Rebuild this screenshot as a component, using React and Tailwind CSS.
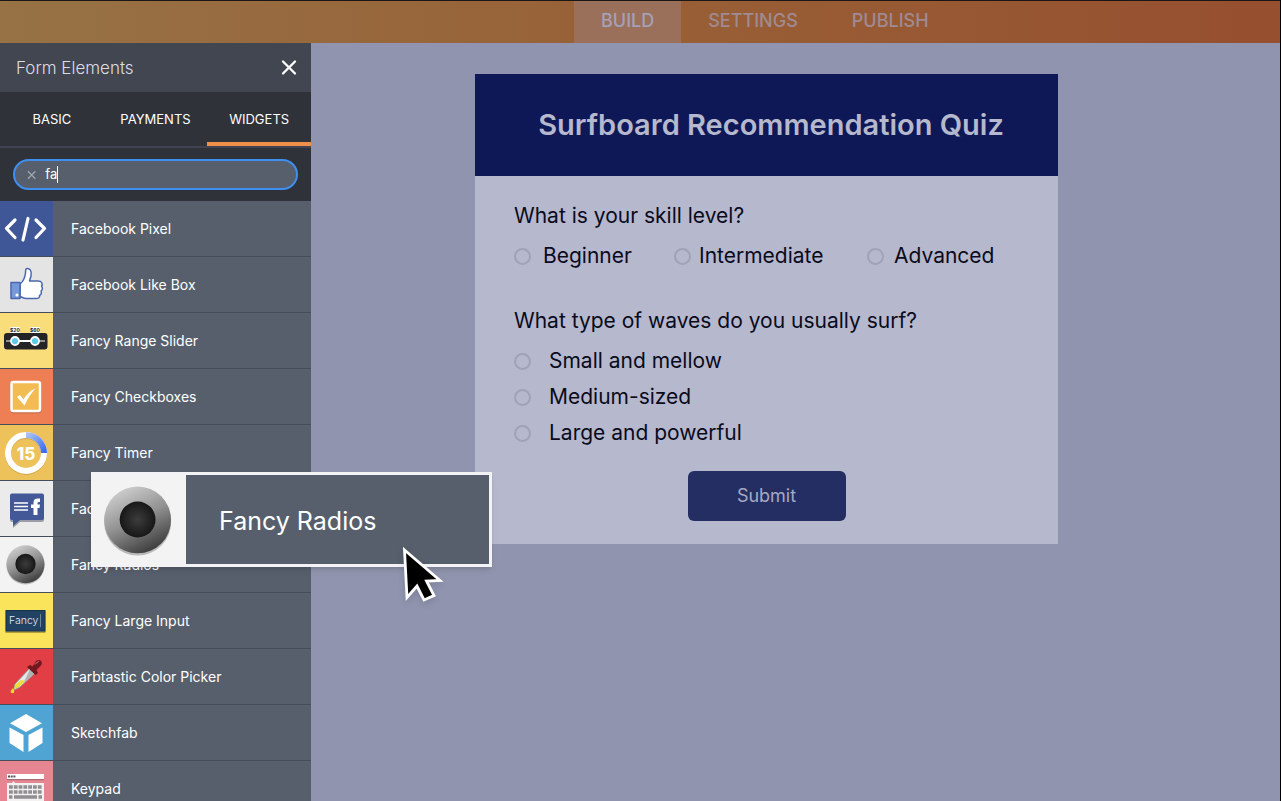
import { useState } from 'react';

const CodeIcon = () => (
  <svg viewBox="0 0 53 55" className="h-full w-full" fill="none" stroke="#fff" strokeWidth="3.200" strokeLinecap="round" strokeLinejoin="round">
    <path d="M15 19L6.500 27.500L15 36.500M36 19L44.500 27.500L36 36.500M28 17.500L23 39" />
  </svg>
);

const LikeIcon = () => (
  <svg viewBox="0 0 53 55" className="h-full w-full" stroke="#4a67ad" strokeWidth="1.500" strokeLinejoin="round">
    <path d="M20 27C24 24 25 20 25.500 16C25.500 12 26 11 28 11.500C31 12 31.500 16 31 19L29.500 24H38C42 24 43 27 41.500 29C43 31 42.500 33 41 34C42 36 41 38 39.500 38.500C40 40.500 38.500 41.500 36 41.500H27C23 41.500 22 40 20 39.500Z" fill="#fff" />
    <rect x="11" y="25.500" width="9" height="16" fill="#7898dc" />
    <circle cx="17" cy="38" r="0.800" fill="#fff" stroke="#fff" />
  </svg>
);

const SliderIcon = () => (
  <svg viewBox="0 0 53 55" className="h-full w-full">
    <rect x="10" y="14" width="10" height="6" rx="1" fill="#fff" />
    <rect x="30" y="14" width="10" height="6" rx="1" fill="#fff" />
    <text x="15" y="19" fontSize="5" fontWeight="700" textAnchor="middle" fill="#222">$20</text>
    <text x="35" y="19" fontSize="5" fontWeight="700" textAnchor="middle" fill="#222">$60</text>
    <rect x="4" y="20" width="43.500" height="16.500" rx="3" fill="#242426" />
    <path d="M6 28H45" stroke="#8d8f91" strokeWidth="2" />
    <path d="M15 28H35" stroke="#fff" strokeWidth="2" />
    <circle cx="15" cy="28" r="4" fill="#5fcbe6" stroke="#fff" strokeWidth="1.800" />
    <circle cx="35" cy="28" r="4" fill="#5fcbe6" stroke="#fff" strokeWidth="1.800" />
  </svg>
);

const CheckIcon = () => (
  <svg viewBox="0 0 53 55" className="h-full w-full">
    <rect x="11.500" y="14.500" width="29" height="29" rx="2.500" fill="none" stroke="#9c5a3c" strokeOpacity=".45" strokeWidth="2" />
    <rect x="11.500" y="13" width="28.500" height="29" rx="2" fill="#f3bc52" stroke="#fff" strokeWidth="2.500" />
    <path d="M17 28L20 26L23.500 30.500C26.500 25.500 30 21.500 35.500 19.500C31 24 27.500 30 24.500 36.500Z" fill="#fff" />
  </svg>
);

const TimerIcon = () => (
  <svg viewBox="0 0 53 55" className="h-full w-full">
    <defs>
      <linearGradient id="timerArc" x1="0" y1="0" x2="1" y2="1">
        <stop offset="0" stopColor="#b7cbf6" />
        <stop offset="1" stopColor="#2c62ef" />
      </linearGradient>
    </defs>
    <circle cx="26" cy="29" r="18" fill="none" stroke="#a77d2f" strokeOpacity=".4" strokeWidth="6" />
    <circle cx="26" cy="28" r="18" fill="none" stroke="#fff" strokeWidth="6" />
    <path d="M26 7A21 21 0 0 1 47 28H41A15 15 0 0 0 26 13Z" fill="url(#timerArc)" />
    <text x="26" y="34.500" fontSize="17" fontWeight="800" textAnchor="middle" fill="#fff">15</text>
  </svg>
);

const CommentIcon = () => (
  <svg viewBox="0 0 53 55" className="h-full w-full">
    <path d="M12 14H42Q44 14 44 16V39Q44 41 42 41H20L13 47V41H12Q10 41 10 39V16Q10 14 12 14Z" fill="#9a9ca8" />
    <path d="M12 12.500H42Q44 12.500 44 14.500V37Q44 39 42 39H20L13 45V39H12Q10 39 10 37V14.500Q10 12.500 12 12.500Z" fill="#425897" />
    <path d="M14 22H28M14 25.500H28M14 29H28" stroke="#fff" strokeWidth="1.300" />
    <path d="M33.500 34V27H31V23.500H33.500V21.500C33.500 18 35.500 17 40 17.500V21C38 21 37.500 21 37.500 23.500H40L39.500 27H37.500V34Z" fill="#fff" />
  </svg>
);

const RadioKnobIcon = ({ id, viewBox = '0 0 53 55' }) => (
  <svg viewBox={viewBox} className="h-full w-full">
    <defs>
      <linearGradient id={id + 'Ring'} x1="0.200" y1="0" x2="0.700" y2="1">
        <stop offset="0" stopColor="#d4d4d4" />
        <stop offset=".5" stopColor="#929292" />
        <stop offset="1" stopColor="#383838" />
      </linearGradient>
      <radialGradient id={id + 'Hole'}>
        <stop offset="0" stopColor="#3c3c3c" />
        <stop offset="1" stopColor="#171717" />
      </radialGradient>
    </defs>
    <circle cx="25.500" cy="28.500" r="19" fill="#b9b9b9" />
    <circle cx="25.500" cy="27.200" r="19" fill={'url(#' + id + 'Ring)'} />
    <circle cx="25.500" cy="27" r="10.200" fill={'url(#' + id + 'Hole)'} />
  </svg>
);

const LargeInputIcon = () => (
  <svg viewBox="0 0 53 55" className="h-full w-full">
    <rect x="5.500" y="18" width="40" height="22" fill="#b2a23c" />
    <rect x="6" y="17.500" width="39" height="20.500" fill="#214263" stroke="#17324e" />
    <text x="9" y="31" fontSize="10.500" fontWeight="300" fill="#e6ebf0">Fancy</text>
    <path d="M40.500 21V34" stroke="#6f879c" />
  </svg>
);

const DropperIcon = () => (
  <svg viewBox="0 0 53 55" className="h-full w-full">
    <path d="M15 35L31 18L36 23L20 38L14 41Z" fill="#e8e8e6" stroke="#979b9b" strokeWidth="1" />
    <path d="M31 18L36 23L23 35Z" fill="#afb4b2" />
    <path d="M15 36L21 31L25 32L19 38L14 40Z" fill="#efdb35" />
    <path d="M13 39C14 41 15 43 13.500 44C11.500 45 10 43 11 41.500Z" fill="#f1dc32" />
    <path d="M27 18L30 16L32.500 17.500L36 12C40 9 44 13 40.500 17L36.500 21L38 24L35.500 26Z" fill="#71171d" />
    <path d="M35 15L38.500 12.500" stroke="#b75155" strokeWidth="1.500" strokeLinecap="round" />
  </svg>
);

const CubeIcon = () => (
  <svg viewBox="0 0 53 55" className="h-full w-full" fill="#fff">
    <path d="M26 9L42 18.300L26 27L10 18.300Z" />
    <path d="M9.500 22.500L23.500 30V47L9.500 38Z" />
    <path d="M42.500 22.500L28.500 30V47L42.500 38Z" />
  </svg>
);

const KeypadIcon = () => (
  <svg viewBox="0 0 53 55" className="h-full w-full">
    <rect x="7" y="13" width="37" height="5" fill="#fff" />
    <path d="M8 15.500H16" stroke="#555" strokeWidth="2" strokeDasharray="2 .7" />
    <path d="M7 18.700H44" stroke="#9b6670" />
    <path d="M7 22H12L13.500 20L15 22H44V42H7Z" fill="#f4f1f1" />
    <path d="M9 26H42M9 31H42" stroke="#8f8f91" strokeWidth="3.500" strokeDasharray="3.800 1" />
    <path d="M9 36H12.500M14 36H37M38.500 36H42" stroke="#8f8f91" strokeWidth="3.500" />
  </svg>
);

const widgets = [
  { name: 'Facebook Pixel', bg: 'bg-[#3f5796]', icon: <CodeIcon /> },
  { name: 'Facebook Like Box', bg: 'bg-[#e4e4e4]', icon: <LikeIcon /> },
  { name: 'Fancy Range Slider', bg: 'bg-[#fadd7b]', icon: <SliderIcon /> },
  { name: 'Fancy Checkboxes', bg: 'bg-[#ee7f55]', icon: <CheckIcon /> },
  { name: 'Fancy Timer', bg: 'bg-[#edc25b]', icon: <TimerIcon /> },
  { name: 'Facebook Comments', bg: 'bg-[#ebebeb]', icon: <CommentIcon /> },
  { name: 'Fancy Radios', bg: 'bg-[#f3f3f3]', icon: <RadioKnobIcon id="row" /> },
  { name: 'Fancy Large Input', bg: 'bg-[#f9e45b]', icon: <LargeInputIcon /> },
  { name: 'Farbtastic Color Picker', bg: 'bg-[#e23e46]', icon: <DropperIcon /> },
  { name: 'Sketchfab', bg: 'bg-[#4fa4d3]', icon: <CubeIcon /> },
  { name: 'Keypad', bg: 'bg-[#e78693]', icon: <KeypadIcon /> },
];

const RadioOption = ({ name, label, className }) => (
  <label className={'flex items-center ' + className}>
    <input type="radio" name={name} className="size-[17px] shrink-0 appearance-none rounded-full border-2 border-[#a0a2b6]" />
    {label}
  </label>
);

const TopBar = () => (
  <header className="flex h-[43px] shrink-0 border-t border-[#1c1614] bg-linear-to-r from-[#967245] via-[#986036] to-[#964f2f] pl-[574px] text-[18px] font-medium text-[#a08a93]">
    <nav className="flex">
      <a href="#build" className="flex items-center bg-[#9a705b] px-[27px] pb-[3px] text-[#a5a0b8]">BUILD</a>
      <a href="#settings" className="flex items-center px-[27px] pb-[3px]">SETTINGS</a>
      <a href="#publish" className="flex items-center px-[27px] pb-[3px]">PUBLISH</a>
    </nav>
  </header>
);

const Sidebar = () => {
  const [search, setSearch] = useState('fa');

  return (
    <aside className="flex w-[311px] shrink-0 flex-col overflow-hidden bg-[#30323a] text-white">
      <div className="flex h-[49px] shrink-0 items-center justify-between bg-[#414651] pl-4 pr-[13px]">
        <h2 className="pt-[2px] text-[17px] font-light text-[#dcdee2]">Form Elements</h2>
        <button type="button" aria-label="Close">
          <svg viewBox="0 0 18 18" className="size-[18px]" stroke="#fff" strokeWidth="2.300" strokeLinecap="round">
            <path d="M3 2.500L15 14.500M15 2.500L3 14.500" />
          </svg>
        </button>
      </div>
      <div className="grid h-[56px] shrink-0 grid-cols-3 border-b-2 border-[#414350] text-[13px]">
        <button type="button" className="pt-px">BASIC</button>
        <button type="button" className="pt-px">PAYMENTS</button>
        <button type="button" className="border-b-4 border-[#f08f49] pt-[5px]">WIDGETS</button>
      </div>
      <div className="shrink-0 px-[13px] pb-[11px] pt-[11px]">
        <div className="relative flex h-[31px] items-center rounded-full border-2 border-[#3f8ff0] bg-[#575f6d] pl-3">
          <svg viewBox="0 0 10 10" className="size-[10px]" stroke="#a2a7b0" strokeWidth="1.300">
            <path d="M1 1L9 9M9 1L1 9" />
          </svg>
          <input
            type="text"
            aria-label="Search widgets"
            value={search}
            onChange={(e) => setSearch(e.target.value)}
            className="ml-[9px] w-full bg-transparent text-[13px] outline-none"
          />
          <span className="absolute left-[42px] h-[17px] w-px bg-white" />
        </div>
      </div>
      <ul>
        {widgets.map((widget) => (
          <li key={widget.name} className="flex h-14 items-center border-b border-[#464d5a] bg-[#575f6d] text-[14px]">
            <div className={'h-full w-[53px] shrink-0 ' + widget.bg}>{widget.icon}</div>
            <span className="ml-[18px]">{widget.name}</span>
          </li>
        ))}
      </ul>
    </aside>
  );
};

const QuizForm = () => (
  <form className="ml-[164px] mt-[31px] h-fit w-[583px] bg-[#b6b8cd] text-[21px] leading-7 text-[#0a0b1c]">
    <h1 className="bg-[#0f1857] py-8 pl-[9px] text-center text-[29px] font-semibold leading-[38px] text-[#b6b8cd]">Surfboard Recommendation Quiz</h1>
    <div className="px-[39px] pb-[23px] pt-[26px]">
      <fieldset>
        <legend>What is your skill level?</legend>
        <div className="mt-3 flex">
          <RadioOption name="skill" label="Beginner" className="w-40 gap-3" />
          <RadioOption name="skill" label="Intermediate" className="w-[193px] gap-2" />
          <RadioOption name="skill" label="Advanced" className="gap-[10px]" />
        </div>
      </fieldset>
      <fieldset className="mt-[37px]">
        <legend>What type of waves do you usually surf?</legend>
        <div className="mt-3 flex flex-col gap-2">
          <RadioOption name="waves" label="Small and mellow" className="gap-[18px]" />
          <RadioOption name="waves" label="Medium-sized" className="gap-[18px]" />
          <RadioOption name="waves" label="Large and powerful" className="gap-[18px]" />
        </div>
      </fieldset>
      <button type="button" className="mx-auto mt-6 block h-[50px] w-[158px] rounded-md bg-[#252e63] pb-px text-[18px] text-[#a6a9c2]">Submit</button>
    </div>
  </form>
);

const DraggedWidget = () => (
  <div className="absolute left-[91px] top-[472px] flex h-[95px] w-[401px] items-center border-[3px] border-l-0 border-[#f3f3f5] bg-[#575f6d] shadow-md">
    <div className="h-full w-[95px] shrink-0 bg-[#f3f3f3]">
      <RadioKnobIcon id="drag" viewBox="-1 2 54 50" />
    </div>
    <span className="ml-[33px] pt-1 text-[25px] text-white">Fancy Radios</span>
    <svg viewBox="0 0 44 60" className="absolute left-[309px] top-[71px] h-[60px] w-11 drop-shadow-md" fill="#000" stroke="#fff" strokeWidth="2.800">
      <path d="M4.500 4L40 34.500L26.500 35L34 49.500L24 54L17 40L7 51.500Z" />
    </svg>
  </div>
);

const App = () => {
  return (
    <div className="relative flex h-screen flex-col overflow-hidden border-r border-black bg-[#9094ae] font-['Inter',sans-serif]">
      <TopBar />
      <div className="flex min-h-0 flex-1">
        <Sidebar />
        <main className="flex-1">
          <QuizForm />
        </main>
      </div>
      <DraggedWidget />
    </div>
  );
};

export default App;
